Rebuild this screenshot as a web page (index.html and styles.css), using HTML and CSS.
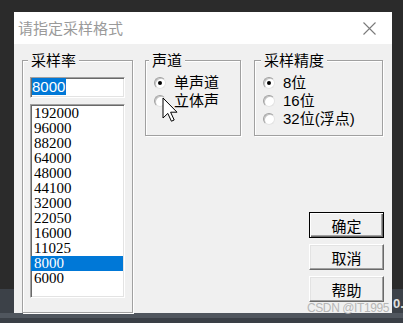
FILE: index.html
```html
<!DOCTYPE html>
<html lang="zh-CN">
<head>
    <meta charset="UTF-8">
    <meta name="viewport" content="width=device-width, initial-scale=1.0">
    <title>请指定采样格式</title>
    <link rel="stylesheet" href="styles.css">
</head>
<body>
    <div class="dialog">
        <div class="titlebar">
            <span class="title">请指定采样格式</span>
            <svg class="close" width="13" height="13" viewBox="0 0 13 13">
                <path d="M0.5 0.5 L12.5 12.5 M12.5 0.5 L0.5 12.5" stroke="#7a7a7a" stroke-width="1.1" fill="none"/>
            </svg>
        </div>
        <div class="content">
            <fieldset class="group rate">
                <legend>采样率</legend>
                <div class="edit"><span class="sel">8000</span></div>
                <ul class="list">
                    <li>192000</li>
                    <li>96000</li>
                    <li>88200</li>
                    <li>64000</li>
                    <li>48000</li>
                    <li>44100</li>
                    <li>32000</li>
                    <li>22050</li>
                    <li>16000</li>
                    <li>11025</li>
                    <li class="selected">8000</li>
                    <li>6000</li>
                </ul>
            </fieldset>

            <div class="side">
                <div class="groups">
                    <fieldset class="group channel">
                        <legend>声道</legend>
                        <label class="opt"><span class="radio on"></span>单声道</label>
                        <label class="opt"><span class="radio"></span>立体声</label>
                    </fieldset>
                    <fieldset class="group depth">
                        <legend>采样精度</legend>
                        <label class="opt"><span class="radio on"></span>8位</label>
                        <label class="opt"><span class="radio"></span>16位</label>
                        <label class="opt"><span class="radio"></span>32位(浮点)</label>
                    </fieldset>
                </div>
                <div class="buttons">
                    <button type="button" class="btn default">确定</button>
                    <button type="button" class="btn">取消</button>
                    <button type="button" class="btn">帮助</button>
                </div>
            </div>
        </div>
    </div>

    <!-- mouse pointer over the dialog -->
    <svg class="cursor" width="17" height="26" viewBox="0 0 17 26">
        <path d="M1 1 L1 21 L5.8 16.4 L9.4 24.2 L12.2 23 L8.6 15.2 L15 15.2 Z" fill="#fff" stroke="#000" stroke-width="1" stroke-linejoin="miter"/>
    </svg>
    <span class="watermark">CSDN @IT1995</span>
    <span class="edge">0.</span>
</body>
</html>
```

FILE: styles.css
```css
body {
    margin: 0;
    font-family: "Noto Sans CJK SC", sans-serif;
    font-size: 15px;
    line-height: 18px;
    color: #000;
    background: linear-gradient(to bottom, #2b2b2b 0, #2b2b2b 289px, #3c4148 289px, #3c4148 313px, #50565e 313px, #50565e 318px, #3a3f46 318px);
    height: 323px;
    overflow: hidden;
}
.dialog {
    margin: 12px 0 0 14px;
    width: 378px;
    height: 301px;
    display: flex;
    flex-direction: column;
}
.titlebar {
    height: 32px;
    background: #fff;
    display: flex;
    align-items: center;
    padding-left: 4px;
}
.title {
    color: #9a9a9a;
}
.close {
    margin-left: auto;
    margin-right: 16px;
}
.content {
    flex: 1;
    background: #f0f0f0;
    display: flex;
    gap: 12px;
    padding: 7px 0 0 8px;
}
.group {
    margin: 0;
    border: 1px solid #a0a0a0;
    box-shadow: inset 1px 1px 0 #fff, 1px 1px 0 #fff;
    min-width: 0;
}
.group legend {
    padding: 0 3px;
    margin-left: -2px;
    background: #f0f0f0;
}
.rate {
    width: 95px;
    padding: 8px 7px 4px;
}
.edit {
    height: 21px;
    box-sizing: border-box;
    background: #fff;
    border: 1px solid;
    border-color: #a0a0a0 #fff #fff #a0a0a0;
    box-shadow: inset 1px 1px 0 #696969, inset -1px -1px 0 #e3e3e3;
    display: flex;
    align-items: flex-start;
    padding-left: 0;
}
.sel {
    font-family: "Liberation Sans", Arial, sans-serif;
    font-size: 15px;
    line-height: 17px;
    background: #0078d7;
    color: #fff;
    margin-left: 1px;
    padding-right: 1px;
}
.list {
    list-style: none;
    margin: 6px 0 0;
    padding: 1px 0 0;
    height: 194px;
    box-sizing: border-box;
    background: #fff;
    border: 1px solid;
    border-color: #a0a0a0 #fff #fff #a0a0a0;
    box-shadow: inset 1px 1px 0 #696969, inset -1px -1px 0 #e3e3e3;
}
.list li {
    font-family: "Liberation Serif", "Times New Roman", serif;
    font-size: 15px;
    height: 15px;
    line-height: 15px;
    padding-left: 3px;
}
.list li.selected {
    background: #0078d7;
    color: #fff;
    margin-right: 1px;
}
.side {
    width: 239px;
    display: flex;
    flex-direction: column;
}
.groups {
    display: flex;
    gap: 13px;
}
.channel,
.depth {
    padding: 5px 8px 7px;
}
.channel {
    width: 78px;
}
.channel legend {
    margin-left: -5px;
}
.depth {
    width: 111px;
}
.opt {
    display: flex;
    align-items: center;
    height: 18px;
    gap: 8px;
    font-family: "Liberation Sans", "Noto Sans CJK SC", sans-serif;
    font-size: 15px;
    line-height: 18px;
    white-space: nowrap;
}
.radio {
    width: 12px;
    height: 12px;
    box-sizing: border-box;
    border-radius: 50%;
    background: #fff;
    border: 1px solid;
    border-color: #a0a0a0 #e3e3e3 #e3e3e3 #a0a0a0;
    box-shadow: inset 1px 1px 0 #c4c4c4;
    display: flex;
    align-items: center;
    justify-content: center;
    flex-shrink: 0;
}
.radio.on::after {
    content: "";
    width: 4px;
    height: 4px;
    border-radius: 50%;
    background: #000;
}
.buttons {
    align-self: flex-end;
    margin-top: 76px;
    display: flex;
    flex-direction: column;
    gap: 6px;
}
.btn {
    width: 75px;
    height: 26px;
    box-sizing: border-box;
    padding: 0;
    font-family: "Noto Sans CJK SC", sans-serif;
    font-size: 15px;
    color: #000;
    background: #f0f0f0;
    border: 1px solid;
    border-color: #fff #696969 #696969 #fff;
    box-shadow: inset -1px -1px 0 #a0a0a0, inset 1px 1px 0 #e3e3e3;
}
.btn.default {
    border: 1px solid #000;
    box-shadow: inset 1px 1px 0 #fff, inset -1px -1px 0 #696969, inset -2px -2px 0 #a0a0a0;
}
.cursor {
    position: absolute;
    left: 162px;
    top: 97px;
}
.watermark {
    position: absolute;
    left: 307px;
    top: 302px;
    font-family: "Liberation Sans", Arial, sans-serif;
    font-size: 12px;
    line-height: 12px;
    letter-spacing: -0.4px;
    color: rgba(175, 175, 175, 0.9);
}
.edge {
    position: absolute;
    left: 393px;
    top: 297px;
    font-family: "Liberation Sans", Arial, sans-serif;
    font-size: 13px;
    font-weight: bold;
    line-height: 13px;
    color: #e0e0e0;
}
```
